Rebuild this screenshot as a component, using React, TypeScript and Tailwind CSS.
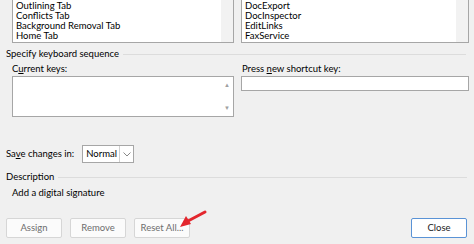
import React from "react";

const font = { fontFamily: 'Lato, "Noto Sans", sans-serif' };

function ListBox({ items, className }: { items: string[]; className: string }) {
  return (
    <div className={`flex h-[43px] border border-t-0 border-[#a6a6a6] bg-white ${className}`}>
      <div className="flex flex-1 flex-col pl-[3px] pt-[1px]">
        {items.map((t) => (
          <div key={t} className="h-[10px] text-[9.5px] leading-[10px] text-black">
            {t}
          </div>
        ))}
      </div>
      <div className="w-[12px] bg-[#f2f2f2]" />
    </div>
  );
}

function Btn({ label, primary }: { label: string; primary?: boolean }) {
  return (
    <div
      className={`flex h-[20px] w-[56px] items-center justify-center rounded-[2px] text-[9.5px] ${
        primary
          ? "border-[1.5px] border-[#5a93d6] bg-white text-[#222]"
          : "border border-[#d6d6d6] bg-[#fbfbfb] text-[#6e6e6e]"
      }`}
    >
      {label}
    </div>
  );
}

export default function App() {
  return (
    <div className="relative h-[244px] w-[474px] overflow-hidden bg-[#f0f0f0] text-black" style={font}>
      {/* lists */}
      <div className="flex gap-[7px] pl-[12px]">
        <ListBox className="w-[222px]" items={["Outlining Tab", "Conflicts Tab", "Background Removal Tab", "Home Tab"]} />
        <ListBox className="w-[228px]" items={["DocExport", "DocInspector", "EditLinks", "FaxService"]} />
      </div>

      {/* keyboard sequence group */}
      <div className="mt-[5px] flex items-center gap-[4px] pl-[6px] pr-[8px]">
        <span className="text-[9.5px] leading-[12px]">Specify keyboard sequence</span>
        <div className="h-px flex-1 bg-[#dcdcdc]" />
      </div>

      <div className="mt-[3px] flex gap-[7px] pl-[12px]">
        <div className="flex w-[222px] flex-col">
          <span className="text-[9.5px] leading-[12px]">
            C<span className="underline">u</span>rrent keys:
          </span>
          <div className="mt-[1px] flex h-[41px] border border-[#a6a6a6] bg-white">
            <div className="flex-1" />
            <div className="flex w-[12px] flex-col items-center justify-between py-[5px] text-[6px] leading-none text-[#a0a0a0]">
              <span>▲</span>
              <span>▼</span>
            </div>
          </div>
        </div>
        <div className="flex w-[228px] flex-col">
          <span className="pl-[1px] text-[9.5px] leading-[12px]">
            Press <span className="underline">n</span>ew shortcut key:
          </span>
          <div className="mt-[1px] h-[15px] border border-[#a6a6a6] bg-white" />
        </div>
      </div>

      {/* save changes */}
      <div className="mt-[28px] flex items-center gap-[8px] pl-[6px]">
        <span className="text-[9.5px] leading-[12px]">
          Sa<span className="underline">v</span>e changes in:
        </span>
        <div className="flex h-[18px] w-[52px] items-center border border-[#a6a6a6] bg-white">
          <span className="flex-1 pl-[3px] text-[9.5px]">Normal</span>
          <div className="flex h-full w-[14px] items-center justify-center border-l border-[#d0d0d0]">
            <svg width="8" height="5" viewBox="0 0 8 5">
              <path d="M0.5 0.5 L4 4 L7.5 0.5" fill="none" stroke="#888" strokeWidth="1" />
            </svg>
          </div>
        </div>
      </div>

      {/* description */}
      <div className="mt-[8px] flex items-center gap-[4px] pl-[6px] pr-[7px]">
        <span className="text-[9.5px] leading-[12px]">Description</span>
        <div className="h-px flex-1 bg-[#dcdcdc]" />
      </div>
      <div className="mt-[4px] pl-[12px] text-[9.5px] leading-[12px]">Add a digital signature</div>

      {/* buttons */}
      <div className="mt-[19px] flex items-center pl-[6px] pr-[7px]">
        <div className="flex gap-[8px]">
          <Btn label="Assign" />
          <Btn label="Remove" />
          <Btn label="Reset All..." />
        </div>
        <div className="flex-1" />
        <Btn label="Close" primary />
      </div>

      {/* red arrow annotation */}
      <svg className="absolute left-[176px] top-[206px]" width="34" height="24" viewBox="0 0 34 24">
        <path d="M29 6 L12 15" stroke="#e3262d" strokeWidth="3" strokeLinecap="round" />
        <path d="M4 21 L10 10 L15 18 Z" fill="#e3262d" />
      </svg>
    </div>
  );
}
